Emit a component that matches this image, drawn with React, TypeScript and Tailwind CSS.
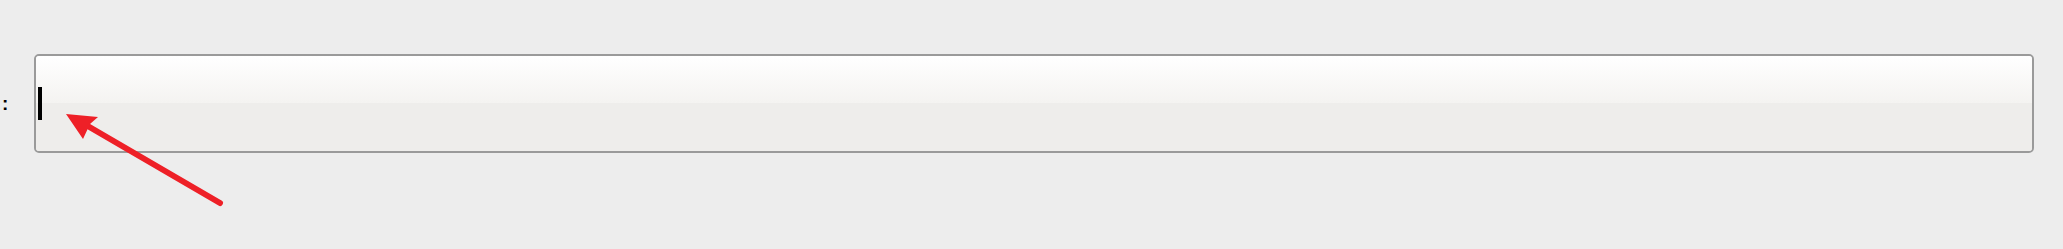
import React from 'react';

const App: React.FC = () => {
  return (
    <div className="relative w-[2063px] h-[249px] bg-[#ededed] overflow-hidden" style={{ fontFamily: '"Liberation Sans", Arial, sans-serif' }}>
      <div className="flex items-center pt-[54px]">
        {/* libellé */}
        <div className="w-[34px] pl-[2px] text-[19px] font-bold text-black leading-none">:</div>

        {/* champ de saisie */}
        <div className="w-[2000px] h-[99px] border-2 border-[#9a9a9a] rounded-[5px] overflow-hidden flex flex-col">
          <div className="h-[47px] bg-gradient-to-b from-white to-[#f4f3f1]" />
          <div className="flex-1 bg-[#eeedeb]" />
        </div>
      </div>

      {/* curseur */}
      <div className="absolute left-[38px] top-[87px] w-[4px] h-[33px] bg-black" />

      {/* flèche d'annotation */}
      <svg className="absolute left-0 top-0" width="2063" height="249" viewBox="0 0 2063 249">
        <line x1="220" y1="203" x2="86" y2="125" stroke="#ee2027" strokeWidth="6" strokeLinecap="round" />
        <polygon points="66,114 98,117 90,124 83,139" fill="#ee2027" />
      </svg>
    </div>
  );
};

export default App;
